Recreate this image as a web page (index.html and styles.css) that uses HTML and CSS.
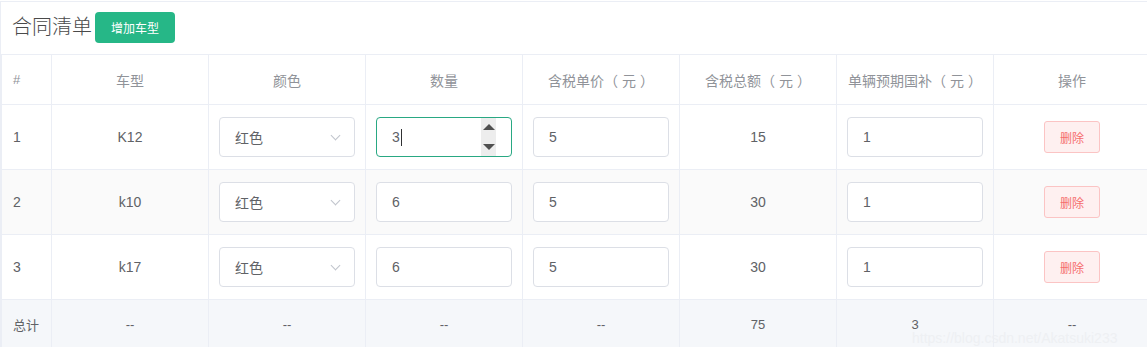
FILE: index.html
```html
<!DOCTYPE html>
<html lang="zh-CN">
<head>
  <meta charset="UTF-8">
  <title>合同清单</title>
  <link rel="stylesheet" href="styles.css">
</head>
<body>
  <div class="card">
    <div class="card-title">
      <span class="title-text">合同清单</span>
      <button class="btn-add">增加车型</button>
    </div>

    <table class="list">
      <colgroup>
        <col class="c-index">
        <col class="c-wide"><col class="c-wide"><col class="c-wide"><col class="c-wide">
        <col class="c-wide"><col class="c-wide"><col class="c-wide">
      </colgroup>
      <thead>
        <tr>
          <th class="left">#</th>
          <th>车型</th>
          <th>颜色</th>
          <th>数量</th>
          <th>含税单价（ 元 ）</th>
          <th>含税总额（ 元 ）</th>
          <th>单辆预期国补（ 元 ）</th>
          <th>操作</th>
        </tr>
      </thead>
      <tbody>
        <tr>
          <td class="left">1</td>
          <td>K12</td>
          <td><div class="select"><span>红色</span><i class="arrow"></i></div></td>
          <td>
            <div class="input focused">
              <span>3</span><span class="caret"></span>
              <div class="spin">
                <span class="tri up"></span>
                <span class="tri down"></span>
              </div>
            </div>
          </td>
          <td><div class="input"><span>5</span></div></td>
          <td>15</td>
          <td><div class="input"><span>1</span></div></td>
          <td><button class="btn-del">删除</button></td>
        </tr>
        <tr class="striped">
          <td class="left">2</td>
          <td>k10</td>
          <td><div class="select"><span>红色</span><i class="arrow"></i></div></td>
          <td><div class="input"><span>6</span></div></td>
          <td><div class="input"><span>5</span></div></td>
          <td>30</td>
          <td><div class="input"><span>1</span></div></td>
          <td><button class="btn-del">删除</button></td>
        </tr>
        <tr>
          <td class="left">3</td>
          <td>k17</td>
          <td><div class="select"><span>红色</span><i class="arrow"></i></div></td>
          <td><div class="input"><span>6</span></div></td>
          <td><div class="input"><span>5</span></div></td>
          <td>30</td>
          <td><div class="input"><span>1</span></div></td>
          <td><button class="btn-del">删除</button></td>
        </tr>
      </tbody>
      <tfoot>
        <tr>
          <td class="left">总计</td>
          <td>--</td>
          <td>--</td>
          <td>--</td>
          <td>--</td>
          <td>75</td>
          <td>3</td>
          <td>--</td>
        </tr>
      </tfoot>
    </table>
  </div>

  <div class="watermark">https://blog.csdn.net/Akatsuki233</div>
</body>
</html>
```

FILE: styles.css
```css
body {
  margin: 0;
  padding-top: 1px;
  font-family: "Liberation Sans", "Noto Sans CJK SC", sans-serif;
  color: #606266;
  background: #fff;
  overflow: hidden;
}

.card {
  width: 1160px;
  border-top: 1px solid #ebeef5;
  border-left: 1px solid #ebeef5;
}

.card-title {
  height: 52px;
  display: flex;
  align-items: center;
  padding-left: 11px;
  gap: 3px;
}

.title-text {
  font-size: 20px;
  font-weight: 300;
  color: #4a4a4a;
  position: relative;
  top: -3px;
}

.btn-add {
  width: 80px;
  height: 31px;
  border: none;
  border-radius: 4px;
  background: #26b787;
  color: #fff;
  font-size: 12px;
  font-family: inherit;
  padding: 0;
  position: relative;
  top: -1px;
}

/* table */
.list {
  border-collapse: collapse;
  table-layout: fixed;
  width: 1149px;
  font-size: 14px;
}

.c-index { width: 50px; }
.c-wide { width: 157px; }

.list th,
.list td {
  border: 1px solid #ebeef5;
  text-align: center;
  padding: 0 10px;
  white-space: nowrap;
}

.list .left {
  text-align: left;
  padding-left: 11px;
}

.list thead th {
  height: 49px;
  font-weight: normal;
  color: #909399;
  font-size: 14px;
}

.list thead th.left { font-size: 13px; }

.list tbody td {
  height: 64px;
  font-size: 14px;
}

.list tbody tr.striped td {
  background: #fafafa;
}

.list tfoot td {
  height: 48px;
  background: #f5f7fa;
  font-size: 13px;
}

/* form controls */
.select,
.input {
  box-sizing: border-box;
  height: 40px;
  width: 136px;
  border: 1px solid #dcdfe6;
  border-radius: 4px;
  background: #fff;
  display: flex;
  align-items: center;
  padding: 0 15px;
  font-size: 14px;
  color: #606266;
  position: relative;
  text-align: left;
}

.select .arrow {
  position: absolute;
  right: 15px;
  top: 14px;
  width: 6px;
  height: 6px;
  border-right: 1px solid #c0c4cc;
  border-bottom: 1px solid #c0c4cc;
  transform: rotate(45deg);
}

.input.focused {
  border-color: #29a883;
}

.caret {
  display: inline-block;
  width: 1px;
  height: 17px;
  background: #303133;
  margin-left: 1px;
}

.spin {
  position: absolute;
  right: 15px;
  top: 0;
  bottom: 0;
  width: 15px;
  background: #ededed;
  display: flex;
  flex-direction: column;
  justify-content: space-between;
  align-items: center;
  padding: 6px 0;
  box-sizing: border-box;
}

.tri {
  width: 0;
  height: 0;
  border-left: 6px solid transparent;
  border-right: 6px solid transparent;
}

.tri.up { border-bottom: 6px solid #505050; }
.tri.down { border-top: 6px solid #505050; }

.btn-del {
  width: 56px;
  height: 32px;
  border: 1px solid #fbc4c4;
  border-radius: 3px;
  background: #fef0f0;
  color: #f56c6c;
  font-size: 12px;
  font-family: inherit;
  padding: 0;
}

.watermark {
  position: absolute;
  left: 912px;
  top: 330px;
  font-size: 14px;
  line-height: 16px;
  color: #eef0f3;
  white-space: nowrap;
}
```
